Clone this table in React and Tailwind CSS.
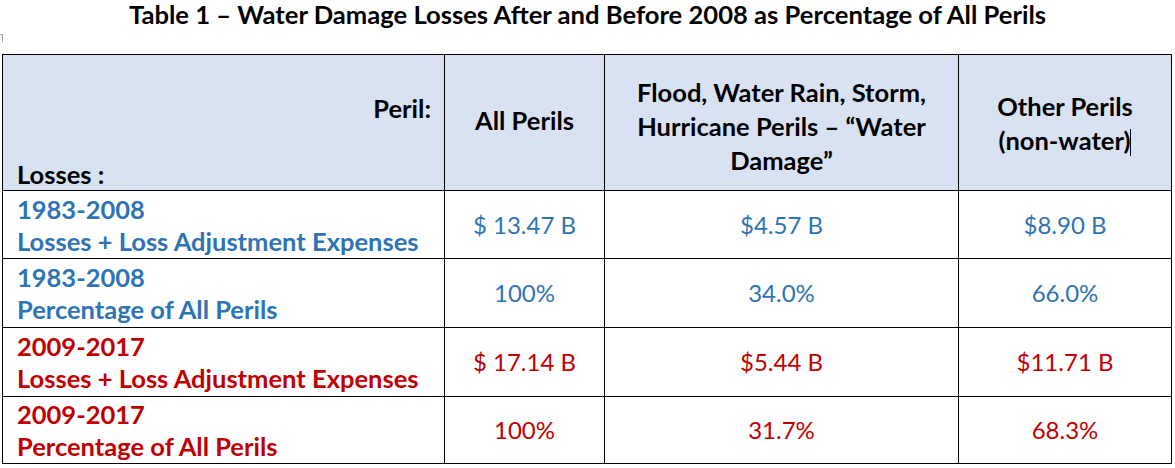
import React from "react";

const font = { fontFamily: "Lato, 'Open Sans', sans-serif" };

const rows = [
  { y: "1983-2008", label: "Losses + Loss Adjustment Expenses", a: "$ 13.47 B", b: "$4.57 B", c: "$8.90 B", color: "text-[#2E74B5]", h: "h-[68px]" },
  { y: "1983-2008", label: "Percentage of All Perils", a: "100%", b: "34.0%", c: "66.0%", color: "text-[#2E74B5]", h: "h-[69px]" },
  { y: "2009-2017", label: "Losses + Loss Adjustment Expenses", a: "$ 17.14 B", b: "$5.44 B", c: "$11.71 B", color: "text-[#C00000]", h: "h-[69px]" },
  { y: "2009-2017", label: "Percentage of All Perils", a: "100%", b: "31.7%", c: "68.3%", color: "text-[#C00000]", h: "h-[67px]" },
];

export default function App() {
  return (
    <div className="w-[1175px] h-[468px] bg-white relative overflow-hidden" style={font}>
      <div className="h-[54px] flex justify-center">
        <h1 className="text-[25.6px] font-bold text-black leading-[28px]">
          Table 1 – Water Damage Losses After and Before 2008 as Percentage of All Perils
        </h1>
      </div>
      <div className="absolute left-0 top-[34px] w-[3px] h-[8px] border-t border-r border-gray-400" />
      <div className="ml-[2px] w-[1170px] border-l border-t border-black grid grid-cols-[442px_160px_354px_213px] text-[25.5px]">
        {/* header */}
        <div className="h-[136px] bg-[#D9E2F3] border-r border-b border-black flex flex-col justify-between pl-[14px] pr-[13px] pt-[37px] pb-[0px] font-bold text-black leading-[32px]">
          <div className="text-right">Peril:</div>
          <div>Losses :</div>
        </div>
        <div className="h-[136px] bg-[#D9E2F3] border-r border-b border-black flex items-center justify-center font-bold text-black pb-[4px]">
          All Perils
        </div>
        <div className="h-[136px] bg-[#D9E2F3] border-r border-b border-black flex items-center justify-center text-center font-bold text-black leading-[34px] pt-[6px]">
          <div>
            Flood, Water Rain, Storm,
            <br />
            Hurricane Perils – “Water
            <br />
            Damage”
          </div>
        </div>
        <div className="h-[136px] bg-[#D9E2F3] border-r border-b border-black flex items-center justify-center text-center font-bold text-black leading-[34px] pb-[0px]">
          <div>
            Other Perils
            <br />
            (non-water)<span className="inline-block w-px h-[27px] bg-black align-[-6px]" />
          </div>
        </div>
        {rows.map((r, i) => (
          <React.Fragment key={i}>
            <div className={`${r.h} border-r border-b border-black pl-[14px] flex flex-col justify-center font-bold leading-[32px] ${r.color}`}>
              <div>{r.y}</div>
              <div>{r.label}</div>
            </div>
            <div className={`${r.h} border-r border-b border-black flex items-center justify-center text-[24px] ${r.color}`}>{r.a}</div>
            <div className={`${r.h} border-r border-b border-black flex items-center justify-center text-[24px] ${r.color}`}>{r.b}</div>
            <div className={`${r.h} border-r border-b border-black flex items-center justify-center text-[24px] ${r.color}`}>{r.c}</div>
          </React.Fragment>
        ))}
      </div>
    </div>
  );
}
